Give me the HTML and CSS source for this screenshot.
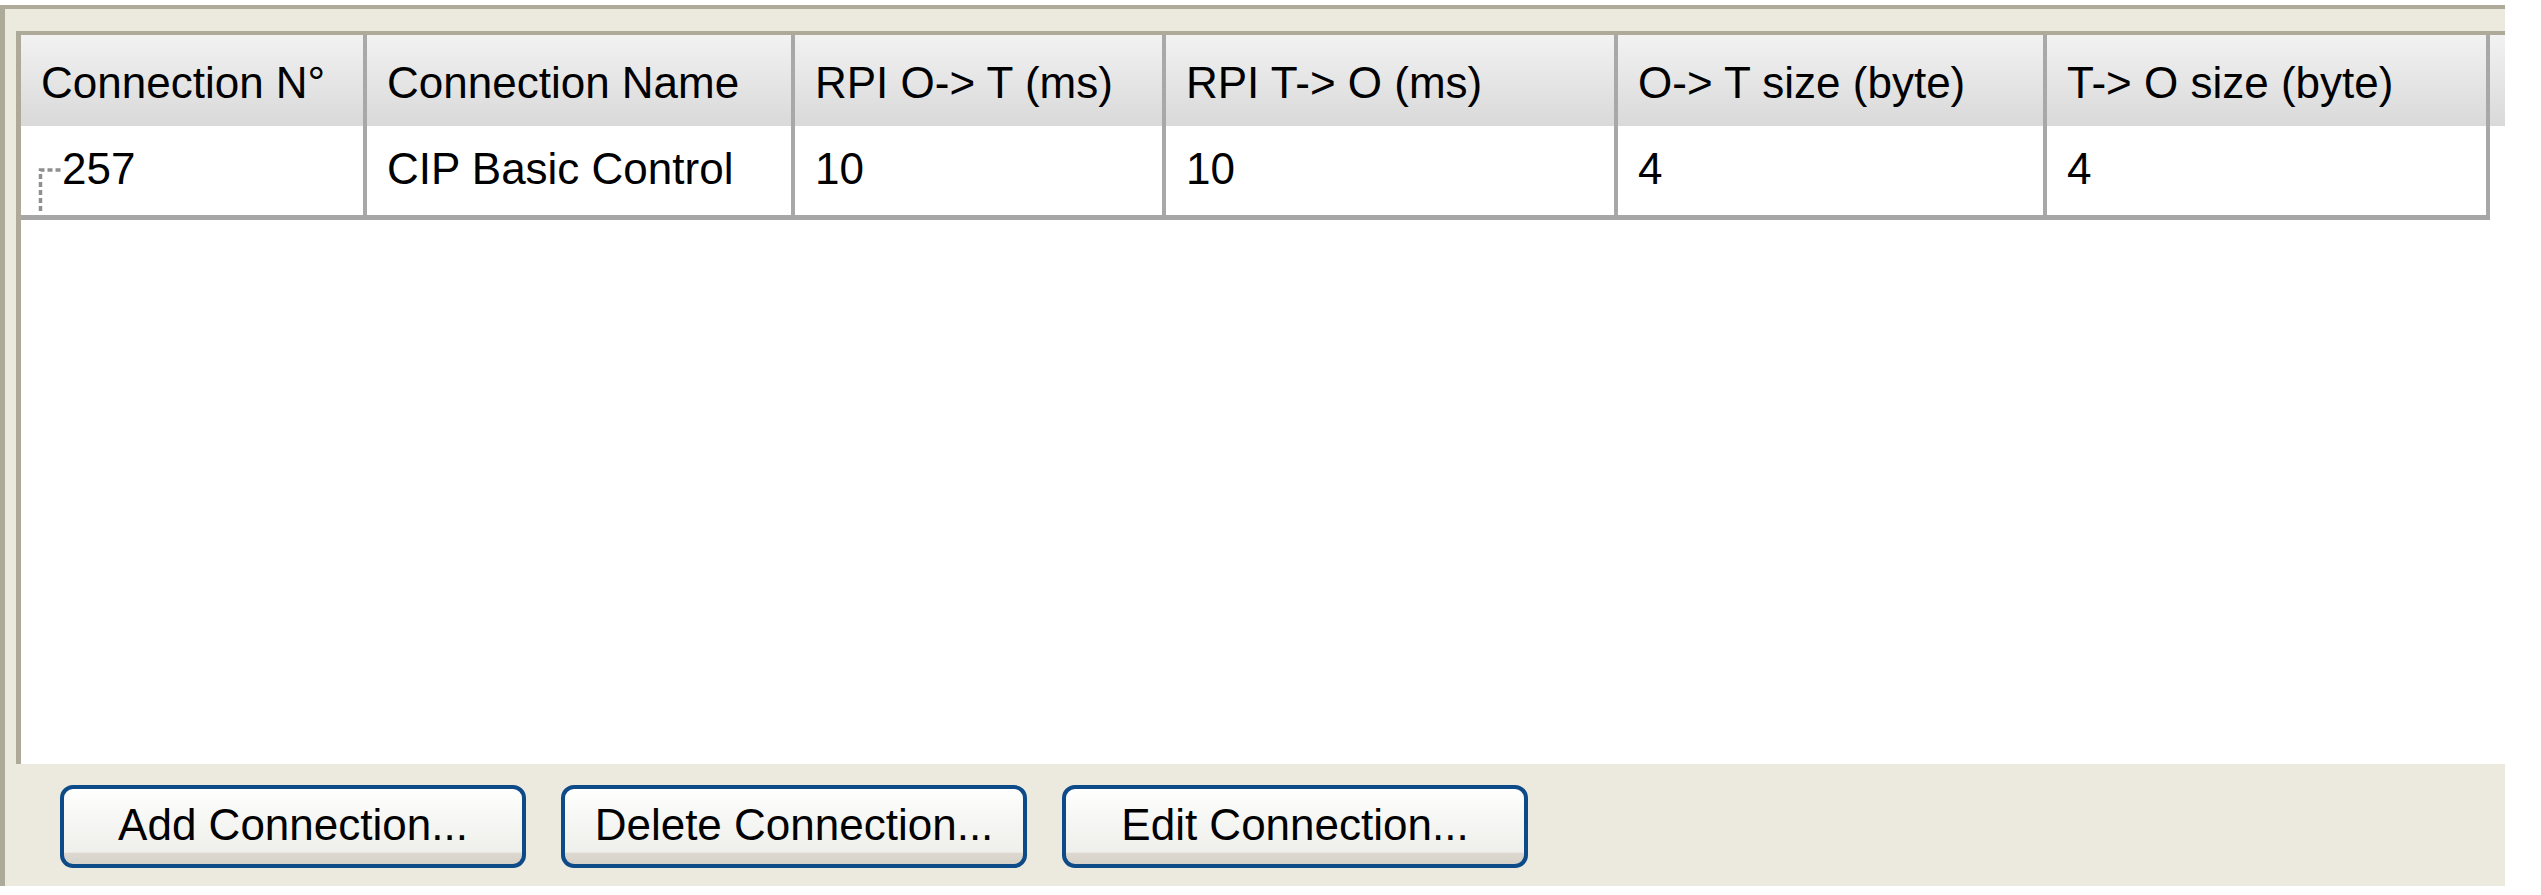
FILE: index.html
```html
<!DOCTYPE html>
<html lang="en">
<head>
    <meta charset="UTF-8">
    <title>Connections</title>
    <link rel="stylesheet" href="styles.css">
</head>
<body>

<div class="panel">
    <div class="list">
        <div class="grid head">
            <div class="cell">Connection N°</div>
            <div class="cell">Connection Name</div>
            <div class="cell">RPI O-&gt; T (ms)</div>
            <div class="cell">RPI T-&gt; O (ms)</div>
            <div class="cell">O-&gt; T size (byte)</div>
            <div class="cell">T-&gt; O size (byte)</div>
            <div class="filler"></div>
        </div>
        <div class="grid row">
            <div class="cell first">
                <svg class="tree" width="24" height="44" viewBox="0 0 24 44">
                    <path d="M2.5 44 V3 H24" fill="none" stroke="#8f8f8f" stroke-width="3.5" stroke-dasharray="5 3"/>
                </svg>
                <span>257</span>
            </div>
            <div class="cell">CIP Basic Control</div>
            <div class="cell">10</div>
            <div class="cell">10</div>
            <div class="cell">4</div>
            <div class="cell">4</div>
        </div>
    </div>

    <div class="actions">
        <button class="btn">Add Connection...</button>
        <button class="btn">Delete Connection...</button>
        <button class="btn">Edit Connection...</button>
    </div>
</div>

</body>
</html>
```

FILE: styles.css
```css
/* Connection list panel */
body {
    margin: 0;
    background-color: #fff;
    font-family: "Liberation Sans", Arial, sans-serif;
    color: #000;
}
.panel {
    width: 2505px;
    box-sizing: border-box;
    margin-top: 5px;
    background-color: #ece9de;
    border-top: 4px solid #aeaa9a;
    border-left: 5px solid #aeaa9a;
}
.list {
    margin: 22px 0 0 11px;
    height: 733px;
    box-sizing: border-box;
    background-color: #fff;
    border-top: 4px solid #aeaa9a;
    border-left: 5px solid #aeaa9a;
}
.grid {
    display: grid;
    font-size: 44px;
}
.head {
    grid-template-columns: 346px 428px 371px 452px 429px 443px 1fr;
    height: 91px;
    background: linear-gradient(#f2f2f2, #d9d9d9);
}
.row {
    grid-template-columns: 346px 428px 371px 452px 429px 443px;
    width: max-content;
    height: 94px;
    box-sizing: border-box;
    border-bottom: 5px solid #a6a6a6;
}
.cell {
    display: flex;
    align-items: center;
    padding-left: 20px;
    border-right: 4px solid #a8a8a8;
    white-space: nowrap;
}
.head .cell {
    padding-top: 4px;
}
.row .cell {
    padding-bottom: 3px;
}
.row .first {
    padding-left: 17px;
    padding-bottom: 0;
}
.tree {
    align-self: flex-end;
    margin-bottom: 4px;
    flex: none;
}
.first span {
    margin-bottom: 3px;
}
.actions {
    height: 122px;
    box-sizing: border-box;
    padding: 21px 0 0 55px;
    display: flex;
    align-items: flex-start;
    gap: 35px;
}
.btn {
    width: 466px;
    height: 83px;
    box-sizing: border-box;
    padding: 0 0 4px 0;
    font-family: "Liberation Sans", Arial, sans-serif;
    font-size: 44px;
    color: #000;
    border: 4px solid #0d4a88;
    border-radius: 13px;
    background: linear-gradient(#ffffff 0%, #f6f6f4 40%, #efefeb 84%, #dcd8d0 86%, #d6d2c9 100%);
    cursor: pointer;
}
```
